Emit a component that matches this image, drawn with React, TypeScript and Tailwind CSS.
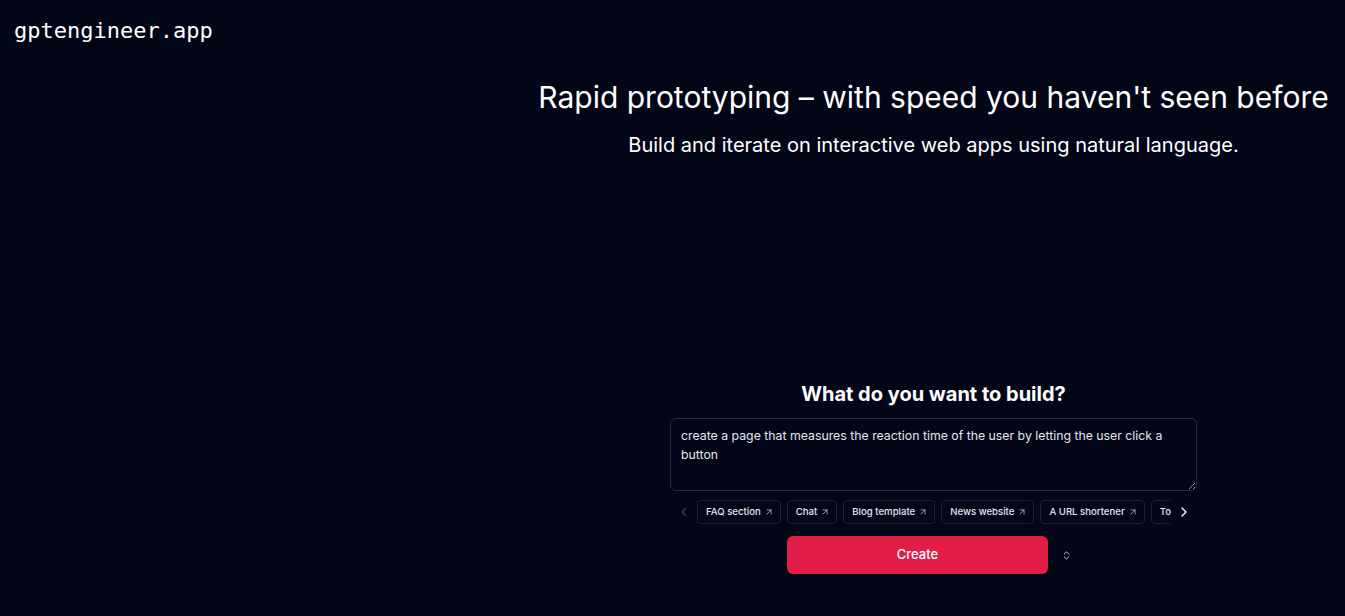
import { useEffect, useRef } from "react"
import { ArrowUpRight, ChevronLeft, ChevronRight, ChevronsUpDown } from "lucide-react"

const examples = ["FAQ section", "Chat", "Blog template", "News website", "A URL shortener", "Todo app"]

export default function App() {
  const inputRef = useRef<HTMLTextAreaElement>(null)

  useEffect(() => {
    const el = inputRef.current
    if (el) {
      el.focus()
      el.setSelectionRange(el.value.length, el.value.length)
    }
  }, [])

  return (
    <div className="min-h-screen bg-[#030617] text-white font-['Inter',sans-serif]">
      {/* Logo */}
      <header className="h-[79px] px-[14px] pt-[17px]">
        <span className="font-['DejaVu_Sans_Mono',monospace] text-[22px] leading-[28px]">gptengineer.app</span>
      </header>

      <main className="grid grid-cols-[522px_1fr]">
        <div />
        <div className="flex flex-col items-center">
          {/* Hero */}
          <h1 className="text-[30px] leading-[36px] font-normal whitespace-nowrap">
            Rapid prototyping – with speed you haven't seen before
          </h1>
          <p className="mt-[16px] text-[20px] leading-[28px]">
            Build and iterate on interactive web apps using natural language.
          </p>

          {/* Prompt form */}
          <div className="mt-[221px] w-[527px] flex flex-col items-center">
            <h2 className="text-[20px] leading-[28px] font-bold">What do you want to build?</h2>

            <textarea
              ref={inputRef}
              defaultValue="create a page that measures the reaction time of the user by letting the user click a button"
              className="mt-[10px] w-full h-[73px] rounded-md border border-[#262c3c] bg-[#030617] px-[10px] pt-[7px] text-[12.3px] leading-[19px] text-[#e5e7eb] caret-white outline-none"
            />

            <div className="mt-[9px] w-full flex items-center h-[24px]">
              <button className="w-[27px] h-full flex items-center justify-center text-[#6b7280]">
                <ChevronLeft size={14} strokeWidth={1.5} />
              </button>
              <div className="flex-1 flex gap-[6px] overflow-hidden">
                {examples.map((label) => (
                  <button
                    key={label}
                    className="shrink-0 h-[24px] flex items-center gap-[3px] pl-[8px] pr-[6px] rounded border border-[#1b2030] text-[9.6px] font-medium text-[#e5e7eb] whitespace-nowrap"
                  >
                    {label}
                    <ArrowUpRight size={10} strokeWidth={1.5} />
                  </button>
                ))}
              </div>
              <button className="w-[26px] h-full flex items-center justify-center text-white">
                <ChevronRight size={16} strokeWidth={2} />
              </button>
            </div>

            <div className="mt-[12px] ml-[2px] flex items-center gap-[2px]">
              <button className="w-[261px] h-[38px] rounded-md bg-[#e11d48] text-[13px] font-medium text-white">
                Create
              </button>
              <button className="w-[32px] h-[38px] flex items-center justify-center text-[#d1d5db]">
                <ChevronsUpDown size={11} strokeWidth={2} />
              </button>
            </div>
          </div>
        </div>
      </main>
    </div>
  )
}
